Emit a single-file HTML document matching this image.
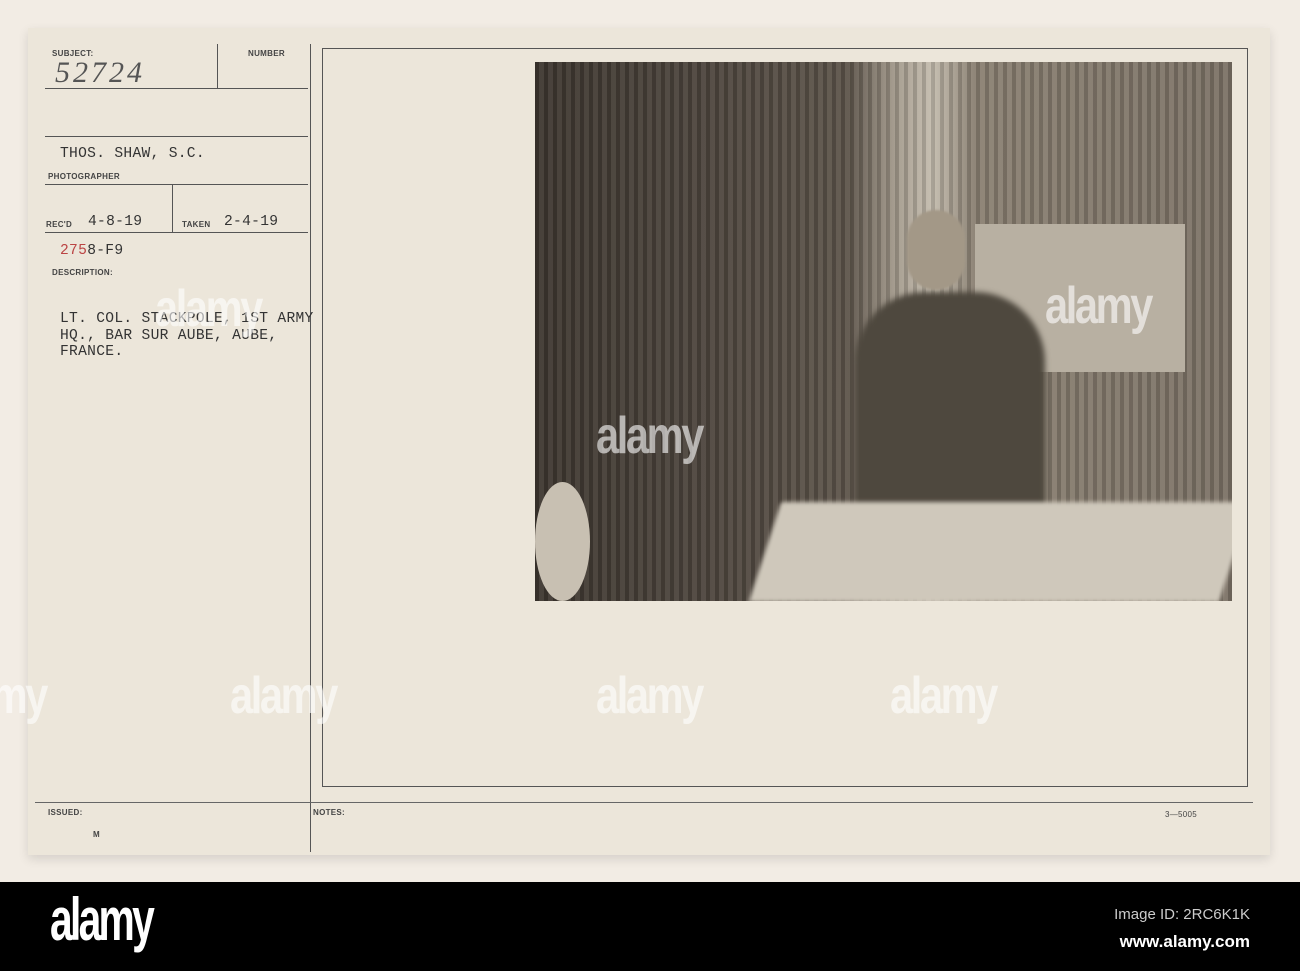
<!DOCTYPE html>
<html><head><style>
body{margin:0;width:1300px;height:971px;background:#f2ece4;position:relative;overflow:hidden;font-family:"Liberation Mono",monospace}
.a{position:absolute}
.card{left:28px;top:28px;width:1242px;height:827px;background:#ece6da;box-shadow:0 4px 10px rgba(0,0,0,.12)}
.hl{position:absolute;height:1px;background:#555}
.vl{position:absolute;width:1px;background:#555}
.lab{position:absolute;font-family:"Liberation Sans",sans-serif;font-size:8px;font-weight:bold;color:#444;letter-spacing:.3px}
.t{position:absolute;font-size:14.6px;color:#333;white-space:pre;letter-spacing:.3px}
.photo{left:535px;top:62px;width:697px;height:539px;background:
linear-gradient(90deg,#3e3730 0%,#4e463e 25%,#5e554b 45%,#a59c8e 52%,#c4bcae 57%,#8a8072 63%,#7c7266 100%);overflow:hidden}
.stripes{position:absolute;inset:0;background:repeating-linear-gradient(90deg,rgba(0,0,0,.14) 0 4px,rgba(255,255,255,.05) 4px 9px)}
.bar{left:0;top:882px;width:1300px;height:89px;background:#000}
.wm{position:absolute;font-family:"Liberation Sans",sans-serif;font-weight:bold;font-size:52px;color:rgba(255,255,255,.6);letter-spacing:-3px;transform:scaleX(.8);transform-origin:left;line-height:1}
</style></head><body>
<div class="a card"></div>
<div class="hl" style="left:45px;top:88px;width:263px"></div>
<div class="hl" style="left:45px;top:136px;width:263px"></div>
<div class="hl" style="left:45px;top:184px;width:263px"></div>
<div class="hl" style="left:45px;top:232px;width:263px"></div>
<div class="vl" style="left:217px;top:44px;height:44px"></div>
<div class="vl" style="left:172px;top:185px;height:47px"></div>
<div class="vl" style="left:310px;top:44px;height:808px"></div>
<div class="a" style="left:322px;top:48px;width:924px;height:737px;border:1px solid #555"></div>
<div class="hl" style="left:35px;top:802px;width:1218px;background:#666"></div>
<div class="lab" style="left:52px;top:49px">SUBJECT:</div>
<div class="lab" style="left:248px;top:49px">NUMBER</div>
<div class="a" style="left:55px;top:56px;font-family:'Liberation Serif',serif;font-style:italic;font-size:30px;color:#555;letter-spacing:3px">52724</div>
<div class="t" style="left:60px;top:146px">THOS. SHAW, S.C.</div>
<div class="lab" style="left:48px;top:172px">PHOTOGRAPHER</div>
<div class="lab" style="left:46px;top:220px">REC'D</div>
<div class="t" style="left:88px;top:214px">4-8-19</div>
<div class="lab" style="left:182px;top:220px">TAKEN</div>
<div class="t" style="left:224px;top:214px">2-4-19</div>
<div class="t" style="left:60px;top:243px"><span style="color:#b44">275</span>8-F9</div>
<div class="lab" style="left:52px;top:268px">DESCRIPTION:</div>
<div class="t" style="left:60px;top:311px;line-height:16.5px">LT. COL. STACKPOLE, 1ST ARMY
HQ., BAR SUR AUBE, AUBE,
FRANCE.</div>
<div class="lab" style="left:48px;top:808px">ISSUED:</div>
<div class="lab" style="left:93px;top:830px">M</div>
<div class="lab" style="left:313px;top:808px">NOTES:</div>
<div class="lab" style="left:1165px;top:810px;font-weight:normal">3—5005</div>
<div class="a photo"><div class="stripes"></div>
<div class="a" style="left:440px;top:162px;width:210px;height:148px;background:#b8b0a2"></div>
<div class="a" style="left:320px;top:230px;width:190px;height:270px;background:#4e483e;border-radius:70px 70px 10px 10px;filter:blur(3px)"></div>
<div class="a" style="left:372px;top:148px;width:58px;height:80px;background:#a39887;border-radius:29px;filter:blur(1px)"></div>
<div class="a" style="left:230px;top:440px;width:470px;height:100px;background:#cfc8bb;transform:skewX(-18deg);filter:blur(2px)"></div>
<div class="a" style="left:0;top:420px;width:55px;height:119px;background:#c8c0b2;border-radius:50%"></div>
</div>
<div class="wm" style="left:155px;top:283px">alamy</div>
<div class="wm" style="left:596px;top:410px">alamy</div>
<div class="wm" style="left:1045px;top:280px">alamy</div>
<div class="wm" style="left:596px;top:670px">alamy</div>
<div class="wm" style="left:890px;top:670px">alamy</div>
<div class="wm" style="left:-60px;top:670px">alamy</div>
<div class="wm" style="left:230px;top:670px">alamy</div>
<div class="a bar"></div>
<div class="a" style="left:50px;top:890px;font-family:'Liberation Sans',sans-serif;font-weight:bold;font-size:60px;color:#fff;letter-spacing:-4px;transform:scaleX(.68);transform-origin:left;line-height:1">alamy</div>
<div class="a" style="left:1080px;top:906px;width:170px;text-align:right;font-family:'Liberation Sans',sans-serif;font-size:15px;color:#ccc">Image ID: 2RC6K1K</div>
<div class="a" style="left:1080px;top:932px;width:170px;text-align:right;font-family:'Liberation Sans',sans-serif;font-size:17px;font-weight:bold;color:#fff">www.alamy.com</div>
</body></html>
